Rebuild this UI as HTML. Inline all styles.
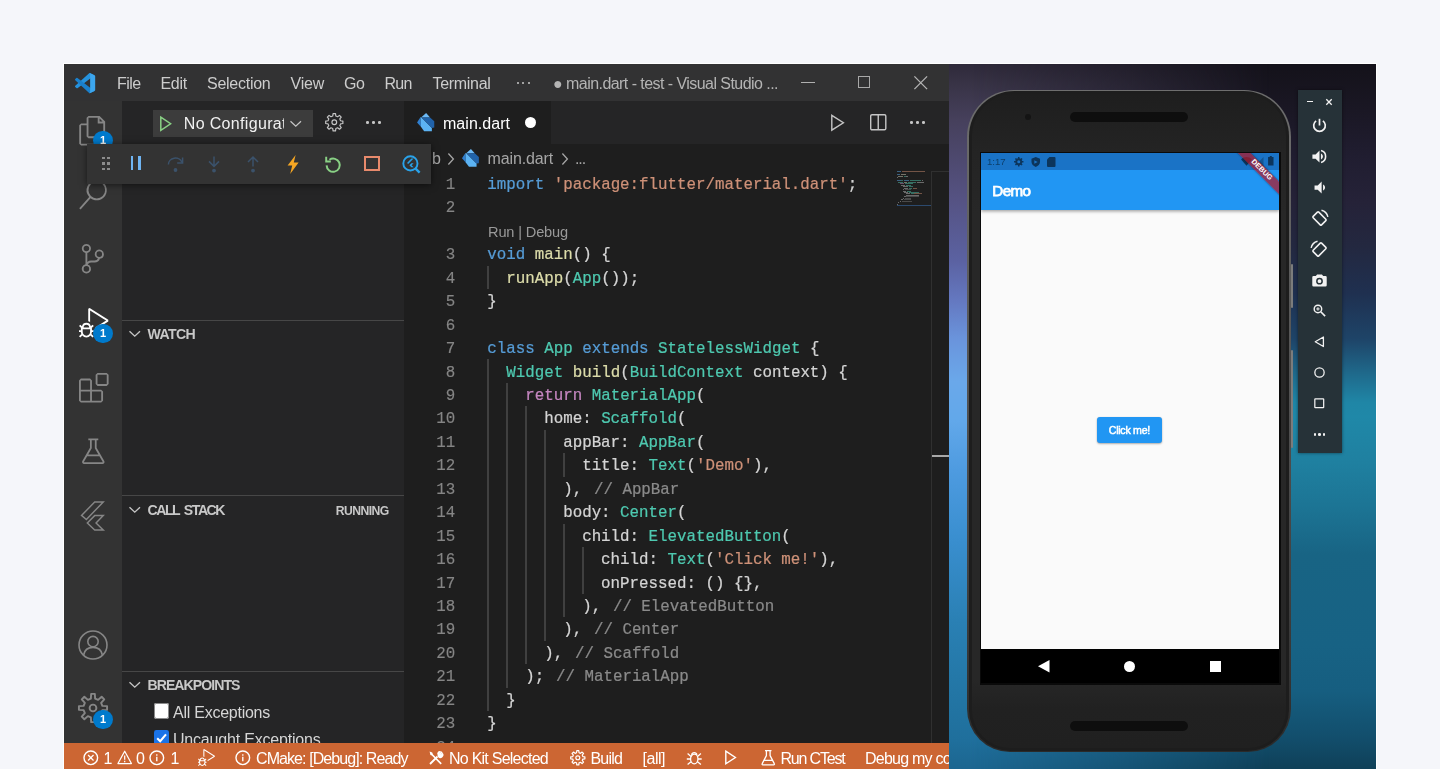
<!DOCTYPE html><html lang="en"><head><meta charset="utf-8"><title>Flutter debugging in VS Code</title>
<style>

html,body{margin:0;padding:0}
html{width:1440px;height:769px;overflow:hidden}
body{width:1440px;height:769px;overflow:hidden;background:#f5f6fa;position:relative;font-family:"Liberation Sans",sans-serif}
.a{position:absolute}
#vs,#code,.t{will-change:opacity}
.t{position:absolute;white-space:pre;line-height:1}
#shot{position:absolute;left:63px;top:63px;width:1314px;height:706px;background:#ffffff}
#vs{position:absolute;left:64px;top:64px;width:885px;height:705px;background:#1e1e1e;overflow:hidden}
#wall{position:absolute;left:949px;top:64px;width:427px;height:705px;overflow:hidden}
.ln{position:absolute;left:404px;width:51.3px;-webkit-text-stroke:0.15px currentColor;text-align:right;color:#858585;white-space:pre;line-height:1;font-family:"Liberation Mono",monospace;font-size:15.82px}
.cl{position:absolute;left:487.3px;-webkit-text-stroke:0.22px currentColor;white-space:pre;line-height:1;font-family:"Liberation Mono",monospace;font-size:15.82px;letter-spacing:-0.004px}
.g{position:absolute;width:1.2px;background:#404040}
svg{position:absolute;overflow:visible}

</style></head><body>
<div id="shot"></div>
<div id="wall" style="z-index:5"><div class="a" style="left:-949px;top:-64px;width:1440px;height:769px">
<div class="a" style="left:949px;top:64px;width:427px;height:705px;background:linear-gradient(to bottom,#14121a 0%,#1a1724 6.5%,#201d30 13%,#252238 19.5%,#232840 26%,#1f3050 32.5%,#1e4468 39%,#1f6a8c 44%,#1f86a6 48%,#1f88a8 50%,#1f80a0 56.6%,#1c7494 63%,#186484 69.6%,#176284 82.5%,#165e80 89%,#124e6c 95.6%,#0f4058 100%)"></div>
<div class="a" style="left:949px;top:64px;width:427px;height:705px;background:linear-gradient(to bottom,#2f2a3a 0%,#3a3549 3.5%,#46405c 8%,#555282 19%,#5b62a2 28%,#6478c0 33.5%,#6a94dc 39%,#6aa8ea 45%,#62a8ea 50.5%,#4e9be0 57.6%,#3a8fd0 67%,#2a80b4 79%,#2478a8 87%,#1f6f9c 96%,#1c6690 100%);-webkit-mask-image:linear-gradient(to right,#000 0%,#000 5%,rgba(0,0,0,.55) 40%,transparent 75%);mask-image:linear-gradient(to right,#000 0%,#000 5%,rgba(0,0,0,.55) 40%,transparent 75%)"></div>
<div class="a" style="left:1290.5px;top:264px;width:2.6px;height:44px;background:#7c7c7c;border-radius:1px"></div>
<div class="a" style="left:1290.5px;top:350px;width:2.6px;height:98px;background:#7c7c7c;border-radius:1px"></div>
<div class="a" style="left:967px;top:89.5px;width:324px;height:662.5px;border-radius:47px 47px 43px 43px;background:linear-gradient(to bottom,#6e6e6e 0%,#5a5a5a 30%,#444 70%,#2a2a2a 100%)"></div>
<div class="a" style="left:968.6px;top:91.3px;width:320.8px;height:659.6px;border-radius:45.5px 45.5px 41.5px 41.5px;background:#1d1d1d"></div>
<div class="a" style="left:972px;top:94px;width:314px;height:654px;border-radius:42px 42px 38px 38px;background:linear-gradient(to bottom,#1e1e1e 0,#242424 60px,#272727 120px,#272727 585px,#212121 615px,#202020 100%)"></div>
<div class="a" style="left:1070px;top:112px;width:118px;height:10px;border-radius:5px;background:#0e0e0e"></div>
<div class="a" style="left:1070px;top:720.5px;width:118px;height:10px;border-radius:5px;background:#0e0e0e"></div>
<div class="a" style="left:1025px;top:114px;width:6px;height:6px;border-radius:50%;background:#141414"></div>
<div class="a" style="left:979.5px;top:151.5px;width:301px;height:533px;background:#0a0a0a"></div>
<div class="a" id="screen" style="left:981px;top:153px;width:298px;height:530px;background:#fafafa;overflow:hidden"><div class="a" style="left:-981px;top:-153px;width:1440px;height:769px">
<div class="a" style="left:981px;top:170px;width:298px;height:40px;background:#2196f3;box-shadow:0 1.5px 3px rgba(0,0,0,.35)"></div>
<div class="a" style="left:981px;top:153px;width:298px;height:17px;background:#1a73c6"></div>
<svg class="a" style="left:1014px;top:157px" width="9.5" height="9.5" viewBox="0 0 20 20" ><path fill="#0c355c" fill-rule="evenodd" d="M8.22 2.82 L8.59 0.10 L11.41 0.10 L11.78 2.82 L13.82 3.66 L16.00 2.00 L18.00 4.00 L16.34 6.18 L17.18 8.22 L19.90 8.59 L19.90 11.41 L17.18 11.78 L16.34 13.82 L18.00 16.00 L16.00 18.00 L13.82 16.34 L11.78 17.18 L11.41 19.90 L8.59 19.90 L8.22 17.18 L6.18 16.34 L4.00 18.00 L2.00 16.00 L3.66 13.82 L2.82 11.78 L0.10 11.41 L0.10 8.59 L2.82 8.22 L3.66 6.18 L2.00 4.00 L4.00 2.00 L6.18 3.66 Z M13.2 10 A3.2 3.2 0 1 0 6.8 10 A3.2 3.2 0 1 0 13.2 10 Z"/></svg>
<svg class="a" style="left:1030.5px;top:156.8px" width="9.5" height="10" viewBox="0 0 20 21" ><path fill="#0c355c" fill-rule="evenodd" d="M10 0 L19 3.5 V10 C19 15 15 19 10 21 C5 19 1 15 1 10 V3.5 Z M7 7 V14 L14 10.5 Z"/></svg>
<svg class="a" style="left:1047px;top:156.8px" width="8.5" height="10" viewBox="0 0 17 20" ><path fill="#0c355c" d="M5 0 H15 A2 2 0 0 1 17 2 V18 A2 2 0 0 1 15 20 H2 A2 2 0 0 1 0 18 V5 Z"/></svg>
<svg class="a" style="left:1241px;top:157px" width="11" height="8.8" viewBox="0 0 22 18" ><path fill="#0c355c" d="M11 18 L0 5 C6 -1.6 16 -1.6 22 5 Z"/></svg>
<svg class="a" style="left:1254.5px;top:156.6px" width="8.5" height="9" viewBox="0 0 17 18" ><path fill="#0c355c" opacity=".45" d="M17 0 V18 H0 Z"/></svg>
<svg class="a" style="left:1267.5px;top:156.4px" width="5.6" height="9.4" viewBox="0 0 11 19" ><path fill="#0c355c" d="M3.5 0 H7.5 V2 H11 V19 H0 V2 H3.5 Z"/></svg>
<div class="a" style="left:1279px;top:153px;width:0;height:0"><div class="a" style="left:-60px;top:20.3px;width:120px;height:8.7px;background:rgba(176,24,40,.72);transform-origin:60px -20.3px;transform:rotate(45deg);text-align:center;line-height:8.7px;font-size:7.2px;font-weight:700;color:#fff;letter-spacing:.1px;box-shadow:0 0 2px rgba(0,0,0,.5)">DEBUG</div></div>
<div class="a" style="left:1097px;top:416.6px;width:65px;height:26px;border-radius:3px;background:#2196f3;box-shadow:0 1px 2px rgba(0,0,0,.3),0 0 1px rgba(0,0,0,.15)"></div>
<div class="a" style="left:981px;top:649px;width:298px;height:34px;background:#000"></div>
<svg class="a" style="left:1037.5px;top:660px" width="11.5" height="12.4" viewBox="0 0 11.5 12.4" ><path fill="#fff" d="M11.5 0 V12.4 L0 6.2 Z"/></svg>
<div class="a" style="left:1124px;top:660.7px;width:11px;height:11px;border-radius:50%;background:#fff"></div>
<div class="a" style="left:1209.5px;top:660.8px;width:11px;height:11px;background:#fff"></div>
</div></div>
<div class="a" style="left:1298px;top:90px;width:44px;height:362.5px;background:#263238;box-shadow:0 0 3px rgba(0,0,0,.5)"></div>
<div class="a" style="left:1307px;top:101.2px;width:6px;height:1.3px;background:#f2f2f2"></div>
<svg class="a" style="left:1326px;top:98.5px" width="6" height="6" viewBox="0 0 6 6" ><path d="M0.3 0.3 L5.7 5.7 M5.7 0.3 L0.3 5.7" stroke="#f2f2f2" stroke-width="1.3" fill="none"/></svg>
<svg class="a" style="left:1311.0px;top:117.0px" width="17" height="17" viewBox="0 0 24 24" ><path d="M12 2.5 V12" stroke="#f2f2f2" stroke-width="2.4" fill="none"/><path d="M7.2 5.4 A8.2 8.2 0 1 0 16.8 5.4" stroke="#f2f2f2" stroke-width="2.4" fill="none"/></svg>
<svg class="a" style="left:1311.0px;top:147.5px" width="17" height="17" viewBox="0 0 24 24" ><path fill="#f2f2f2" d="M2 9 V15 H6.5 L12 20.5 V3.5 L6.5 9 Z"/><path fill="#f2f2f2" d="M14 7.8 V16.2 C15.7 15.4 16.8 13.8 16.8 12 C16.8 10.2 15.7 8.6 14 7.8 Z"/><path d="M14.2 3.6 A8.7 8.7 0 0 1 14.2 20.4" stroke="#f2f2f2" stroke-width="2.2" fill="none"/></svg>
<svg class="a" style="left:1311.0px;top:179.0px" width="17" height="17" viewBox="0 0 24 24" ><path fill="#f2f2f2" d="M5 9 V15 H9.5 L15 20.5 V3.5 L9.5 9 Z"/><path fill="#f2f2f2" d="M17 7.8 V16.2 C18.7 15.4 19.8 13.8 19.8 12 C19.8 10.2 18.7 8.6 17 7.8 Z"/></svg>
<svg class="a" style="left:1310.0px;top:209.0px" width="19" height="19" viewBox="0 0 24 24" ><rect x="7" y="4.5" width="10" height="15" rx="1.2" transform="rotate(-45 12 12)" fill="none" stroke="#f2f2f2" stroke-width="2"/><path d="M14.5 1.6 A11 11 0 0 1 22.6 10" stroke="#f2f2f2" stroke-width="1.8" fill="none"/></svg>
<svg class="a" style="left:1310.0px;top:240.0px" width="19" height="19" viewBox="0 0 24 24" ><rect x="7" y="4.5" width="10" height="15" rx="1.2" transform="rotate(45 12 12)" fill="none" stroke="#f2f2f2" stroke-width="2"/><path d="M9.5 1.6 A11 11 0 0 0 1.4 10" stroke="#f2f2f2" stroke-width="1.8" fill="none"/></svg>
<svg class="a" style="left:1311.0px;top:271.5px" width="17" height="17" viewBox="0 0 24 24" ><path fill="#f2f2f2" fill-rule="evenodd" d="M8.6 3.5 H15.4 L17.2 5.6 H20.4 A1.8 1.8 0 0 1 22.2 7.4 V18.8 A1.8 1.8 0 0 1 20.4 20.6 H3.6 A1.8 1.8 0 0 1 1.8 18.8 V7.4 A1.8 1.8 0 0 1 3.6 5.6 H6.8 Z M12 8.2 A4.8 4.8 0 1 0 12 17.8 A4.8 4.8 0 1 0 12 8.2 Z M12 10.3 A2.7 2.7 0 1 1 12 15.7 A2.7 2.7 0 1 1 12 10.3 Z"/></svg>
<svg class="a" style="left:1312.0px;top:303.0px" width="15" height="15" viewBox="0 0 24 24" ><circle cx="9.5" cy="9.5" r="6" fill="none" stroke="#f2f2f2" stroke-width="2.3"/><path d="M14 14 L21 21" stroke="#f2f2f2" stroke-width="2.6"/><path d="M6.8 9.5 H12.2 M9.5 6.8 V12.2" stroke="#f2f2f2" stroke-width="1.6"/></svg>
<svg class="a" style="left:1312.75px;top:335.25px" width="13.5" height="13.5" viewBox="0 0 24 24" ><path d="M18.5 3.5 V20.5 L4 12 Z" fill="none" stroke="#f2f2f2" stroke-width="2.3" stroke-linejoin="round"/></svg>
<svg class="a" style="left:1313.0px;top:366.1px" width="13" height="13" viewBox="0 0 24 24" ><circle cx="12" cy="12" r="8.6" fill="none" stroke="#f2f2f2" stroke-width="2.4"/></svg>
<svg class="a" style="left:1313.25px;top:397.25px" width="12.5" height="12.5" viewBox="0 0 24 24" ><rect x="3.5" y="3.5" width="17" height="17" rx="1" fill="none" stroke="#f2f2f2" stroke-width="2.4"/></svg>
<div class="a" style="left:1313.9px;top:433.0px;width:2.6px;height:2.6px;border-radius:50%;background:#f2f2f2"></div>
<div class="a" style="left:1318.2px;top:433.0px;width:2.6px;height:2.6px;border-radius:50%;background:#f2f2f2"></div>
<div class="a" style="left:1322.5px;top:433.0px;width:2.6px;height:2.6px;border-radius:50%;background:#f2f2f2"></div>
</div></div>
<div id="vs"><div class="a" style="left:-64px;top:-64px;width:1440px;height:769px">
<div class="a" style="left:64px;top:64px;width:885px;height:37px;background:#323233"></div>
<svg class="a" style="left:75px;top:72.8px" width="20.2" height="20.2" viewBox="0 0 100 100" ><path fill="#2592dd" d="M96.5 10.8 75.9 0.9a6.2 6.2 0 0 0-7.1 1.2L1.3 63.6a4.2 4.2 0 0 0 0 6.2l5.5 5a4.2 4.2 0 0 0 5.3.2L93.3 13.4c2.7-2.1 6.7-.1 6.7 3.3v-.2a6.300 6.300 0 0 0-3.500-5.700z"/><path fill="#1a80cc" d="M96.5 89.200 75.900 99.100a6.200 6.200 0 0 1-7.100-1.200L1.300 36.400a4.200 4.200 0 0 1 0-6.200l5.500-5a4.200 4.200 0 0 1 5.300-.2L93.300 86.600c2.700 2.100 6.700.1 6.700-3.300v.2a6.300 6.300 0 0 1-3.500 5.700z"/><path fill="#3ca6ee" d="M75.900 99.100a6.200 6.200 0 0 1-7.100-1.200c2.300 2.300 6.200.7 6.200-2.600V4.700c0-3.300-3.900-4.900-6.200-2.600a6.200 6.200 0 0 1 7.100-1.200l20.600 9.900A6.300 6.300 0 0 1 100 16.500v67a6.300 6.300 0 0 1-3.500 5.700z"/></svg>
<div class="a" style="left:516.5px;top:82px;width:2px;height:2px;border-radius:50%;background:#c8c8c8"></div>
<div class="a" style="left:522px;top:82px;width:2px;height:2px;border-radius:50%;background:#c8c8c8"></div>
<div class="a" style="left:527.5px;top:82px;width:2px;height:2px;border-radius:50%;background:#c8c8c8"></div>
<div class="a" style="left:801px;top:82px;width:14px;height:1.3px;background:#b0b0b0"></div>
<div class="a" style="left:858px;top:76px;width:12px;height:12px;box-sizing:border-box;border:1.3px solid #a8a8a8"></div>
<svg class="a" style="left:914px;top:75.5px" width="13.5" height="13.5" viewBox="0 0 13.5 13.5" ><path d="M0.4 0.4 L13.1 13.1 M13.1 0.4 L0.4 13.1" stroke="#b4b4b4" stroke-width="1.3" fill="none"/></svg>
<div class="a" style="left:64px;top:101px;width:58px;height:642px;background:#333333"></div>
<svg class="a" style="left:78.2px;top:115.7px" width="29.6" height="29.6" viewBox="0 0 24 24" ><path fill="#868686" d="M17.5 0h-9L7 1.5V6H2.5L1 7.5v15.07L2.5 24h12.07L16 22.57V18h4.7l1.3-1.43V4.5L17.5 0zm0 2.12l2.38 2.38H17.5V2.12zm-3 20.38h-12v-15H7v9.07L8.5 18h6v4.5zm6-6h-12v-15H16V6h4.5v10.5z"/></svg>
<div class="a" style="left:93.4px;top:130.70000000000002px;width:19.2px;height:19.2px;border-radius:50%;background:#007acc"></div><span class="t" style="left:93.4px;width:19.2px;text-align:center;top:134.70000000000002px;font-size:11px;font-weight:700;color:#fff">1</span>
<svg class="a" style="left:78.2px;top:179.7px" width="29.6" height="29.6" viewBox="0 0 24 24" ><path fill="#868686" d="M15.25 0a8.25 8.25 0 0 0-6.18 13.72L1 22.88l1.12 1.12 8.05-9.12A8.251 8.251 0 1 0 15.25.01V0zm0 15a6.75 6.75 0 1 1 0-13.5 6.75 6.75 0 0 1 0 13.5z"/></svg>
<svg class="a" style="left:78.2px;top:243.7px" width="29.6" height="29.6" viewBox="0 0 24 24" ><path fill="#868686" d="M21.007 8.222A3.738 3.738 0 0 0 15.045 5.2a3.737 3.737 0 0 0 1.156 6.583 2.988 2.988 0 0 1-2.668 1.67h-2.99a4.456 4.456 0 0 0-2.989 1.165V7.4a3.737 3.737 0 1 0-1.494 0v9.117a3.776 3.776 0 1 0 1.816.099 2.99 2.99 0 0 1 2.668-1.667h2.99a4.484 4.484 0 0 0 4.223-3.039 3.736 3.736 0 0 0 3.25-3.687zM4.565 3.738a2.242 2.242 0 1 1 4.484 0 2.242 2.242 0 0 1-4.484 0zm4.484 16.441a2.242 2.242 0 1 1-4.484 0 2.242 2.242 0 0 1 4.484 0zm8.221-9.715a2.242 2.242 0 1 1 0-4.485 2.242 2.242 0 0 1 0 4.485z"/></svg>
<svg class="a" style="left:78.7px;top:308.2px" width="29.6" height="29.6" viewBox="0 0 24 24" ><path fill="#ffffff" d="M10.94 13.5l-1.32 1.32a3.73 3.73 0 0 0-7.24 0L1.06 13.5 0 14.56l1.72 1.72-.22.22V18H0v1.5h1.5v.08c.077.489.214.966.41 1.42L0 22.94 1.06 24l1.65-1.65A4.308 4.308 0 0 0 6 24a4.31 4.31 0 0 0 3.29-1.65L10.94 24 12 22.94 10.09 21c.198-.464.336-.951.41-1.45v-.1H12V18h-1.5v-1.5l-.22-.22L12 14.56l-1.06-1.06zM6 13.5a2.25 2.25 0 0 1 2.25 2.25h-4.5A2.25 2.25 0 0 1 6 13.5zm3 6a3.33 3.33 0 0 1-3 3 3.33 3.33 0 0 1-3-3v-2.25h6v2.25zm14.76-9.9v1.26L13.5 17.37V15.6l8.5-5.37L9 2v9.46a5.07 5.07 0 0 0-1.5-.72V.63L8.64 0l15.12 9.6z"/></svg>
<div class="a" style="left:93.4px;top:323.9px;width:19.2px;height:19.2px;border-radius:50%;background:#007acc"></div><span class="t" style="left:93.4px;width:19.2px;text-align:center;top:327.9px;font-size:11px;font-weight:700;color:#fff">1</span>
<svg class="a" style="left:78.7px;top:372.7px" width="29.6" height="29.6" viewBox="0 0 24 24" ><path fill="#868686" d="M13.5 1.5L15 0h7.5L24 1.5V9l-1.5 1.5H15L13.5 9V1.5zm1.5 0V9h7.5V1.5H15zM0 15V6l1.5-1.5H9L10.5 6v7.5H18l1.5 1.5v7.5L18 24H1.5L0 22.5V15zm9-1.5V6H1.5v7.5H9zM9 15H1.5v7.5H9V15zm1.5 7.5H18V15h-7.5v7.5z"/></svg>
<svg class="a" style="left:79.9px;top:438.2px" width="26.6" height="26.6" viewBox="0 0 24 24" ><path fill="none" stroke="#868686" stroke-width="1.6" stroke-linejoin="round" d="M7.5 1.2 H16.5 M9.8 1.2 V9 L2.8 21.2 A1 1 0 0 0 3.7 22.7 H20.3 A1 1 0 0 0 21.2 21.2 L14.2 9 V1.2 M6.2 15.6 H17.8"/></svg>
<svg class="a" style="left:79.6px;top:501.2px" width="24.2" height="30" viewBox="0 0 25 30" preserveAspectRatio="none"><path fill="none" stroke="#868686" stroke-width="1.5" stroke-linejoin="miter" d="M15.2 1 H24 L6.6 18.6 L1.6 14.4 Z M15.2 14.6 H24 L16.6 22 L24 29 H15.2 L7.6 22 Z"/></svg>
<svg class="a" style="left:78px;top:630px" width="30" height="30" viewBox="0 0 30 30" ><circle cx="15" cy="15" r="14" fill="none" stroke="#868686" stroke-width="1.6"/><circle cx="15" cy="11.6" r="5.2" fill="none" stroke="#868686" stroke-width="1.6"/><path d="M5.6 25 C6.6 20 10.4 17.4 15 17.4 C19.6 17.4 23.4 20 24.4 25" fill="none" stroke="#868686" stroke-width="1.6"/></svg>
<svg class="a" style="left:77.5px;top:693px" width="30" height="30" viewBox="0 0 30 30" ><path fill="none" stroke="#868686" stroke-width="1.9" stroke-linejoin="round" d="M12.87 5.64 L13.16 0.92 L16.84 0.92 L17.13 5.64 L20.11 6.87 L23.65 3.74 L26.26 6.35 L23.13 9.89 L24.36 12.87 L29.08 13.16 L29.08 16.84 L24.36 17.13 L23.13 20.11 L26.26 23.65 L23.65 26.26 L20.11 23.13 L17.13 24.36 L16.84 29.08 L13.16 29.08 L12.87 24.36 L9.89 23.13 L6.35 26.26 L3.74 23.65 L6.87 20.11 L5.64 17.13 L0.92 16.84 L0.92 13.16 L5.64 12.87 L6.87 9.89 L3.74 6.35 L6.35 3.74 L9.89 6.87 Z"/><circle cx="15" cy="15" r="3.4" fill="none" stroke="#868686" stroke-width="1.9"/></svg>
<div class="a" style="left:93.4px;top:709.9px;width:19.2px;height:19.2px;border-radius:50%;background:#007acc"></div><span class="t" style="left:93.4px;width:19.2px;text-align:center;top:713.9px;font-size:11px;font-weight:700;color:#fff">1</span>
<div class="a" style="left:122px;top:101px;width:282px;height:642px;background:#252526"></div>
<div class="a" style="left:153px;top:109.5px;width:159.5px;height:27px;background:#3c3c3c"></div>
<svg class="a" style="left:160px;top:115.5px" width="11.5" height="15.5" viewBox="0 0 11.5 15.5" ><path d="M0.8 1.2 L10.6 7.75 L0.8 14.3 Z" fill="none" stroke="#89d185" stroke-width="1.5" stroke-linejoin="miter"/></svg>
<svg class="a" style="left:324.6px;top:113.2px" width="18.6" height="18.6" viewBox="0 0 30 30" ><path fill="none" stroke="#c5c5c5" stroke-width="1.9" stroke-linejoin="round" d="M12.49 4.91 L13.03 1.14 L16.97 1.14 L17.51 4.91 L20.36 6.09 L23.41 3.80 L26.20 6.59 L23.91 9.64 L25.09 12.49 L28.86 13.03 L28.86 16.97 L25.09 17.51 L23.91 20.36 L26.20 23.41 L23.41 26.20 L20.36 23.91 L17.51 25.09 L16.97 28.86 L13.03 28.86 L12.49 25.09 L9.64 23.91 L6.59 26.20 L3.80 23.41 L6.09 20.36 L4.91 17.51 L1.14 16.97 L1.14 13.03 L4.91 12.49 L6.09 9.64 L3.80 6.59 L6.59 3.80 L9.64 6.09 Z"/><circle cx="15" cy="15" r="3.8" fill="none" stroke="#c5c5c5" stroke-width="1.9"/></svg>
<div class="a" style="left:366.4px;top:121.3px;width:2.7px;height:2.7px;border-radius:50%;background:#c5c5c5"></div>
<div class="a" style="left:372.2px;top:121.3px;width:2.7px;height:2.7px;border-radius:50%;background:#c5c5c5"></div>
<div class="a" style="left:377.9px;top:121.3px;width:2.7px;height:2.7px;border-radius:50%;background:#c5c5c5"></div>
<div class="a" style="left:122px;top:319.5px;width:282px;height:1px;background:#474747"></div>
<div class="a" style="left:122px;top:495.0px;width:282px;height:1px;background:#474747"></div>
<div class="a" style="left:122px;top:671.0px;width:282px;height:1px;background:#474747"></div>
<svg class="a" style="left:129.15px;top:331.425px" width="11.5" height="5.75" viewBox="0 0 11.5 5.75" ><path d="M0.5 0.3 L5.75 5.15 L11.0 0.3" fill="none" stroke="#c5c5c5" stroke-width="1.4"/></svg>
<svg class="a" style="left:129.15px;top:506.925px" width="11.5" height="5.75" viewBox="0 0 11.5 5.75" ><path d="M0.5 0.3 L5.75 5.15 L11.0 0.3" fill="none" stroke="#c5c5c5" stroke-width="1.4"/></svg>
<svg class="a" style="left:129.15px;top:682.325px" width="11.5" height="5.75" viewBox="0 0 11.5 5.75" ><path d="M0.5 0.3 L5.75 5.15 L11.0 0.3" fill="none" stroke="#c5c5c5" stroke-width="1.4"/></svg>
<div class="a" style="left:153.8px;top:703.3px;width:15px;height:15.4px;border-radius:2.4px;background:#ffffff;box-shadow:inset 0 0 0 1px #8a8a8a"></div>
<div class="a" style="left:153.8px;top:730px;width:15px;height:15.4px;border-radius:2.4px;background:#1a73e8"></div>
<svg class="a" style="left:153.8px;top:730px" width="15" height="15.4" viewBox="0 0 15 15.4" ><path d="M3.2 8.2 L6.2 11.2 L12 4.4" fill="none" stroke="#fff" stroke-width="2.1"/></svg>
<div class="a" style="left:404px;top:101px;width:545px;height:43px;background:#252526"></div>
<div class="a" style="left:404px;top:101px;width:146.5px;height:43px;background:#1e1e1e"></div>
<svg class="a" style="left:414px;top:110px" width="26" height="26" viewBox="0 0 77 77" ><path d="M36 9 L47.5 22 L21 22.5 Z" fill="#6cbaf7"/><path d="M19.5 21 L9 37 L20.5 49.5 Z" fill="#2f7fd0"/><path d="M19.5 21 L23 23 L53 53 L53 63 L30 63 L20.5 49.5 Z" fill="#5cb3f3"/><path d="M23 23 L21 22.5 L47.5 22 L60 33.5 L60 52 L53 53 Z" fill="#2163aa"/></svg>
<div class="a" style="left:525px;top:117px;width:11px;height:11px;border-radius:50%;background:#ffffff"></div>
<svg class="a" style="left:831px;top:114px" width="13.5" height="17.5" viewBox="0 0 13.5 17.5" ><path d="M0.8 1.3 L12.4 8.75 L0.8 16.2 Z" fill="none" stroke="#c5c5c5" stroke-width="1.4"/></svg>
<svg class="a" style="left:870px;top:114.3px" width="16.5" height="16.5" viewBox="0 0 16.5 16.5" ><rect x="0.7" y="0.7" width="15.1" height="15.1" rx="1.3" fill="none" stroke="#c5c5c5" stroke-width="1.4"/><path d="M8.25 0.7 V15.8" stroke="#c5c5c5" stroke-width="1.4"/></svg>
<div class="a" style="left:909.9px;top:121.3px;width:2.7px;height:2.7px;border-radius:50%;background:#c5c5c5"></div>
<div class="a" style="left:915.9px;top:121.3px;width:2.7px;height:2.7px;border-radius:50%;background:#c5c5c5"></div>
<div class="a" style="left:921.9px;top:121.3px;width:2.7px;height:2.7px;border-radius:50%;background:#c5c5c5"></div>
<svg class="a" style="left:447.6px;top:152.5px" width="6.0" height="12" viewBox="0 0 6.0 12" ><path d="M0.4 0.5 L5.4 6.0 L0.4 11.5" fill="none" stroke="#a6a6a6" stroke-width="1.3"/></svg>
<svg class="a" style="left:458.6px;top:145.9px" width="25.5" height="25.5" viewBox="0 0 77 77" ><path d="M36 9 L47.5 22 L21 22.5 Z" fill="#6cbaf7"/><path d="M19.5 21 L9 37 L20.5 49.5 Z" fill="#2f7fd0"/><path d="M19.5 21 L23 23 L53 53 L53 63 L30 63 L20.5 49.5 Z" fill="#5cb3f3"/><path d="M23 23 L21 22.5 L47.5 22 L60 33.5 L60 52 L53 53 Z" fill="#2163aa"/></svg>
<svg class="a" style="left:561.5px;top:152.5px" width="6.0" height="12" viewBox="0 0 6.0 12" ><path d="M0.4 0.5 L5.4 6.0 L0.4 11.5" fill="none" stroke="#a6a6a6" stroke-width="1.3"/></svg>
<div class="a" style="left:897px;top:171px;width:34px;height:34px;overflow:hidden;opacity:.62"><div class="a" style="left:0.0px;top:0.4px;width:4.3px;height:1.1px;background:#4f8cc0"></div><div class="a" style="left:5.0px;top:0.4px;width:23.0px;height:1.1px;background:#a8765f"></div><div class="a" style="left:0.0px;top:3.3px;width:2.9px;height:1.1px;background:#4f8cc0"></div><div class="a" style="left:3.6px;top:3.3px;width:5.8px;height:1.1px;background:#a9a996"></div><div class="a" style="left:1.4px;top:4.8px;width:4.3px;height:1.1px;background:#a9a996"></div><div class="a" style="left:6.5px;top:4.8px;width:2.2px;height:1.1px;background:#45a08c"></div><div class="a" style="left:8.6px;top:4.8px;width:2.9px;height:1.1px;background:#999"></div><div class="a" style="left:0.0px;top:6.3px;width:0.7px;height:1.1px;background:#999"></div><div class="a" style="left:0.0px;top:9.2px;width:3.6px;height:1.1px;background:#4f8cc0"></div><div class="a" style="left:4.3px;top:9.2px;width:2.2px;height:1.1px;background:#45a08c"></div><div class="a" style="left:7.2px;top:9.2px;width:5.0px;height:1.1px;background:#4f8cc0"></div><div class="a" style="left:13.0px;top:9.2px;width:10.8px;height:1.1px;background:#45a08c"></div><div class="a" style="left:24.5px;top:9.2px;width:0.7px;height:1.1px;background:#999"></div><div class="a" style="left:1.4px;top:10.7px;width:4.3px;height:1.1px;background:#45a08c"></div><div class="a" style="left:6.5px;top:10.7px;width:3.6px;height:1.1px;background:#a9a996"></div><div class="a" style="left:10.8px;top:10.7px;width:8.6px;height:1.1px;background:#45a08c"></div><div class="a" style="left:20.2px;top:10.7px;width:7.2px;height:1.1px;background:#999"></div><div class="a" style="left:2.9px;top:12.2px;width:4.3px;height:1.1px;background:#9a6f9a"></div><div class="a" style="left:7.9px;top:12.2px;width:7.9px;height:1.1px;background:#45a08c"></div><div class="a" style="left:4.3px;top:13.6px;width:3.6px;height:1.1px;background:#999"></div><div class="a" style="left:8.6px;top:13.6px;width:5.8px;height:1.1px;background:#45a08c"></div><div class="a" style="left:5.8px;top:15.1px;width:5.0px;height:1.1px;background:#999"></div><div class="a" style="left:11.5px;top:15.1px;width:4.3px;height:1.1px;background:#45a08c"></div><div class="a" style="left:7.2px;top:16.6px;width:4.3px;height:1.1px;background:#999"></div><div class="a" style="left:12.2px;top:16.6px;width:2.9px;height:1.1px;background:#45a08c"></div><div class="a" style="left:15.8px;top:16.6px;width:4.3px;height:1.1px;background:#a8765f"></div><div class="a" style="left:5.8px;top:18.0px;width:1.4px;height:1.1px;background:#999"></div><div class="a" style="left:7.9px;top:18.0px;width:6.5px;height:1.1px;background:#666"></div><div class="a" style="left:5.8px;top:19.5px;width:3.6px;height:1.1px;background:#999"></div><div class="a" style="left:10.1px;top:19.5px;width:4.3px;height:1.1px;background:#45a08c"></div><div class="a" style="left:7.2px;top:21.0px;width:4.3px;height:1.1px;background:#999"></div><div class="a" style="left:12.2px;top:21.0px;width:10.1px;height:1.1px;background:#45a08c"></div><div class="a" style="left:8.6px;top:22.4px;width:4.3px;height:1.1px;background:#999"></div><div class="a" style="left:13.7px;top:22.4px;width:2.9px;height:1.1px;background:#45a08c"></div><div class="a" style="left:17.3px;top:22.4px;width:7.9px;height:1.1px;background:#a8765f"></div><div class="a" style="left:8.6px;top:23.9px;width:13.0px;height:1.1px;background:#999"></div><div class="a" style="left:7.2px;top:25.4px;width:1.4px;height:1.1px;background:#999"></div><div class="a" style="left:9.4px;top:25.4px;width:12.2px;height:1.1px;background:#666"></div><div class="a" style="left:5.8px;top:26.9px;width:1.4px;height:1.1px;background:#999"></div><div class="a" style="left:7.9px;top:26.9px;width:6.5px;height:1.1px;background:#666"></div><div class="a" style="left:4.3px;top:28.3px;width:1.4px;height:1.1px;background:#999"></div><div class="a" style="left:6.5px;top:28.3px;width:7.9px;height:1.1px;background:#666"></div><div class="a" style="left:2.9px;top:29.8px;width:1.4px;height:1.1px;background:#999"></div><div class="a" style="left:5.0px;top:29.8px;width:10.1px;height:1.1px;background:#666"></div><div class="a" style="left:1.4px;top:31.3px;width:0.7px;height:1.1px;background:#999"></div><div class="a" style="left:0.0px;top:32.7px;width:0.7px;height:1.1px;background:#999"></div></div><div class="a" style="left:897px;top:204.5px;width:34px;height:1px;background:#2c4a6e"></div>
<div class="a" style="left:931px;top:171px;width:1px;height:572px;background:#303030"></div>
<div class="a" style="left:931px;top:171px;width:18px;height:1px;background:#303030"></div>
<div class="a" style="left:932px;top:454.5px;width:17px;height:2px;background:#a8a8a8"></div>
</div></div>
<div id="code">
<div class="g" style="left:487.4px;top:265.55px;height:23.45px"></div>
<div class="g" style="left:487.4px;top:359.35px;height:351.75px"></div>
<div class="g" style="left:506.4px;top:382.80px;height:304.85px"></div>
<div class="g" style="left:525.4px;top:406.25px;height:257.95px"></div>
<div class="g" style="left:544.4px;top:429.70px;height:211.05px"></div>
<div class="g" style="left:563.4px;top:453.15px;height:23.45px"></div>
<div class="g" style="left:563.4px;top:523.50px;height:93.80px"></div>
<div class="g" style="left:582.4px;top:546.95px;height:46.90px"></div>
<div class="ln" style="top:177.92px">1</div>
<div class="cl" style="top:177.92px"><span style="color:#569cd6">import</span><span style="color:#d4d4d4"> </span><span style="color:#ce9178">'package:flutter/material.dart'</span><span style="color:#d4d4d4">;</span></div>
<div class="ln" style="top:201.37px">2</div>
<div class="ln" style="top:248.27px">3</div>
<div class="cl" style="top:248.27px"><span style="color:#569cd6">void</span><span style="color:#d4d4d4"> </span><span style="color:#dcdcaa">main</span><span style="color:#d4d4d4">() {</span></div>
<div class="ln" style="top:271.72px">4</div>
<div class="cl" style="top:271.72px"><span style="color:#d4d4d4">  </span><span style="color:#dcdcaa">runApp</span><span style="color:#d4d4d4">(</span><span style="color:#4ec9b0">App</span><span style="color:#d4d4d4">());</span></div>
<div class="ln" style="top:295.17px">5</div>
<div class="cl" style="top:295.17px"><span style="color:#d4d4d4">}</span></div>
<div class="ln" style="top:318.62px">6</div>
<div class="ln" style="top:342.07px">7</div>
<div class="cl" style="top:342.07px"><span style="color:#569cd6">class</span><span style="color:#d4d4d4"> </span><span style="color:#4ec9b0">App</span><span style="color:#d4d4d4"> </span><span style="color:#569cd6">extends</span><span style="color:#d4d4d4"> </span><span style="color:#4ec9b0">StatelessWidget</span><span style="color:#d4d4d4"> {</span></div>
<div class="ln" style="top:365.52px">8</div>
<div class="cl" style="top:365.52px"><span style="color:#d4d4d4">  </span><span style="color:#4ec9b0">Widget</span><span style="color:#d4d4d4"> </span><span style="color:#dcdcaa">build</span><span style="color:#d4d4d4">(</span><span style="color:#4ec9b0">BuildContext</span><span style="color:#d4d4d4"> context) {</span></div>
<div class="ln" style="top:388.97px">9</div>
<div class="cl" style="top:388.97px"><span style="color:#d4d4d4">    </span><span style="color:#c586c0">return</span><span style="color:#d4d4d4"> </span><span style="color:#4ec9b0">MaterialApp</span><span style="color:#d4d4d4">(</span></div>
<div class="ln" style="top:412.42px">10</div>
<div class="cl" style="top:412.42px"><span style="color:#d4d4d4">      home: </span><span style="color:#4ec9b0">Scaffold</span><span style="color:#d4d4d4">(</span></div>
<div class="ln" style="top:435.87px">11</div>
<div class="cl" style="top:435.87px"><span style="color:#d4d4d4">        appBar: </span><span style="color:#4ec9b0">AppBar</span><span style="color:#d4d4d4">(</span></div>
<div class="ln" style="top:459.32px">12</div>
<div class="cl" style="top:459.32px"><span style="color:#d4d4d4">          title: </span><span style="color:#4ec9b0">Text</span><span style="color:#d4d4d4">(</span><span style="color:#ce9178">'Demo'</span><span style="color:#d4d4d4">),</span></div>
<div class="ln" style="top:482.77px">13</div>
<div class="cl" style="top:482.77px"><span style="color:#d4d4d4">        ), </span><span style="color:#8a8a8a;margin-left:2.3px">// AppBar</span></div>
<div class="ln" style="top:506.22px">14</div>
<div class="cl" style="top:506.22px"><span style="color:#d4d4d4">        body: </span><span style="color:#4ec9b0">Center</span><span style="color:#d4d4d4">(</span></div>
<div class="ln" style="top:529.67px">15</div>
<div class="cl" style="top:529.67px"><span style="color:#d4d4d4">          child: </span><span style="color:#4ec9b0">ElevatedButton</span><span style="color:#d4d4d4">(</span></div>
<div class="ln" style="top:553.12px">16</div>
<div class="cl" style="top:553.12px"><span style="color:#d4d4d4">            child: </span><span style="color:#4ec9b0">Text</span><span style="color:#d4d4d4">(</span><span style="color:#ce9178">'Click me!'</span><span style="color:#d4d4d4">),</span></div>
<div class="ln" style="top:576.57px">17</div>
<div class="cl" style="top:576.57px"><span style="color:#d4d4d4">            onPressed: () {},</span></div>
<div class="ln" style="top:600.02px">18</div>
<div class="cl" style="top:600.02px"><span style="color:#d4d4d4">          ), </span><span style="color:#8a8a8a;margin-left:2.3px">// ElevatedButton</span></div>
<div class="ln" style="top:623.47px">19</div>
<div class="cl" style="top:623.47px"><span style="color:#d4d4d4">        ), </span><span style="color:#8a8a8a;margin-left:2.3px">// Center</span></div>
<div class="ln" style="top:646.92px">20</div>
<div class="cl" style="top:646.92px"><span style="color:#d4d4d4">      ), </span><span style="color:#8a8a8a;margin-left:2.3px">// Scaffold</span></div>
<div class="ln" style="top:670.37px">21</div>
<div class="cl" style="top:670.37px"><span style="color:#d4d4d4">    ); </span><span style="color:#8a8a8a;margin-left:2.3px">// MaterialApp</span></div>
<div class="ln" style="top:693.82px">22</div>
<div class="cl" style="top:693.82px"><span style="color:#d4d4d4">  }</span></div>
<div class="ln" style="top:717.27px">23</div>
<div class="cl" style="top:717.27px"><span style="color:#d4d4d4">}</span></div>
<div class="ln" style="top:740.72px">24</div>
</div>
<div class="a" style="left:64px;top:743.4px;width:885px;height:26px;background:#cc6633;z-index:3"></div>
<svg class="a" style="left:82.7px;top:750.0px;z-index:4" width="15.6" height="15.6" viewBox="0 0 16 16"><circle cx="8" cy="8" r="7" fill="none" stroke="#ffffff" stroke-width="1.45"/><path d="M5.2 5.2 L10.8 10.8 M10.8 5.2 L5.2 10.8" stroke="#ffffff" stroke-width="1.3"/></svg>
<svg class="a" style="left:116.8px;top:750.3px;z-index:4" width="15.4" height="14.6" viewBox="0 0 16 15"><path d="M8 1.2 L15 14 H1 Z" fill="none" stroke="#ffffff" stroke-width="1.3" stroke-linejoin="round"/><path d="M8 5.6 V10 M8 11.2 V12.6" stroke="#ffffff" stroke-width="1.3"/></svg>
<svg class="a" style="left:149.2px;top:750.0px;z-index:4" width="15.6" height="15.6" viewBox="0 0 16 16"><circle cx="8" cy="8" r="7" fill="none" stroke="#ffffff" stroke-width="1.45"/><path d="M8 7 V11.6 M8 4.4 V5.8" stroke="#ffffff" stroke-width="1.4"/></svg>
<svg class="a" style="left:234.7px;top:750.0px;z-index:4" width="15.6" height="15.6" viewBox="0 0 16 16"><circle cx="8" cy="8" r="7" fill="none" stroke="#ffffff" stroke-width="1.45"/><path d="M8 7 V11.6 M8 4.4 V5.8" stroke="#ffffff" stroke-width="1.4"/></svg>
<svg class="a" style="left:197.5px;top:749.3px;z-index:4" width="17" height="17" viewBox="0 0 24 24"><path fill="#ffffff" d="M10.94 13.5l-1.32 1.32a3.73 3.73 0 0 0-7.24 0L1.06 13.5 0 14.56l1.72 1.72-.22.22V18H0v1.5h1.5v.08c.077.489.214.966.41 1.42L0 22.94 1.06 24l1.65-1.65A4.308 4.308 0 0 0 6 24a4.31 4.31 0 0 0 3.29-1.65L10.94 24 12 22.94 10.09 21c.198-.464.336-.951.41-1.45v-.1H12V18h-1.5v-1.5l-.22-.22L12 14.56l-1.06-1.06zM6 13.5a2.25 2.25 0 0 1 2.25 2.25h-4.5A2.25 2.25 0 0 1 6 13.5zm3 6a3.33 3.33 0 0 1-3 3 3.33 3.33 0 0 1-3-3v-2.25h6v2.25zm14.76-9.9v1.26L13.5 17.37V15.6l8.5-5.37L9 2v9.46a5.07 5.07 0 0 0-1.5-.72V.63L8.64 0l15.12 9.6z"/></svg>
<svg class="a" style="left:428px;top:749.8px;z-index:4" width="16" height="16" viewBox="0 0 16 16"><path d="M2 14 L9.5 6.5 M14 2 L10.2 5.8" stroke="#ffffff" stroke-width="1.8" fill="none"/><path d="M9.2 3.2 A3 3 0 0 1 13.2 1.4 L11.4 3.2 L12.8 4.6 L14.6 2.8 A3 3 0 0 1 10 7 Z" fill="#ffffff"/><path d="M1.6 1.6 L4.2 2.6 L5 4.4 L13.8 13.2 L12.6 14.4 L3.8 5.6 L2.4 5 Z" fill="#ffffff"/></svg>
<svg class="a" style="left:569.5px;top:750.0px;z-index:4" width="15.6" height="15.6" viewBox="0 0 30 30"><path fill="none" stroke="#ffffff" stroke-width="2.3" stroke-linejoin="round" d="M12.59 5.29 L13.06 1.34 L16.94 1.34 L17.41 5.29 L20.16 6.43 L23.29 3.96 L26.04 6.71 L23.57 9.84 L24.71 12.59 L28.66 13.06 L28.66 16.94 L24.71 17.41 L23.57 20.16 L26.04 23.29 L23.29 26.04 L20.16 23.57 L17.41 24.71 L16.94 28.66 L13.06 28.66 L12.59 24.71 L9.84 23.57 L6.71 26.04 L3.96 23.29 L6.43 20.16 L5.29 17.41 L1.34 16.94 L1.34 13.06 L5.29 12.59 L6.43 9.84 L3.96 6.71 L6.71 3.96 L9.84 6.43 Z"/><circle cx="15" cy="15" r="3.8" fill="none" stroke="#ffffff" stroke-width="2.3"/></svg>
<svg class="a" style="left:685.5px;top:749.8px;z-index:4" width="16.5" height="16" viewBox="0 0 16.5 16"><ellipse cx="8.25" cy="9" rx="3.7" ry="4.8" fill="none" stroke="#ffffff" stroke-width="1.3"/><path d="M5.6 4.8 A2.7 2.7 0 0 1 10.9 4.8 M0.8 9 H4.5 M12 9 H15.7 M1.6 3.6 L5 6.4 M14.9 3.6 L11.5 6.4 M1.6 14.6 L5 11.8 M14.9 14.6 L11.5 11.8" fill="none" stroke="#ffffff" stroke-width="1.3"/></svg>
<svg class="a" style="left:724.5px;top:750.3px;z-index:4" width="11.5" height="15" viewBox="0 0 11.5 15"><path d="M0.8 1.2 L10.4 7.5 L0.8 13.8 Z" fill="none" stroke="#ffffff" stroke-width="1.4"/></svg>
<svg class="a" style="left:760.5px;top:750.0px;z-index:4" width="14.5" height="15.6" viewBox="0 0 14.5 15.6"><path d="M4 0.7 H10.5 M5.4 0.7 V5.6 L1.2 13.6 A0.8 0.8 0 0 0 1.9 14.9 H12.6 A0.8 0.8 0 0 0 13.3 13.6 L9.1 5.6 V0.7 M3.3 10.4 H11.2" fill="none" stroke="#ffffff" stroke-width="1.3" stroke-linejoin="round"/></svg>
<div class="a" style="left:87px;top:144px;width:344px;height:39.6px;background:#333333;box-shadow:0 1px 7px rgba(0,0,0,.55);z-index:3"></div>
<div class="a" style="left:102.39999999999999px;top:157.20000000000002px;width:2.3px;height:2.3px;background:#8c8c8c;z-index:4"></div>
<div class="a" style="left:102.39999999999999px;top:162.4px;width:2.3px;height:2.3px;background:#8c8c8c;z-index:4"></div>
<div class="a" style="left:102.39999999999999px;top:167.60000000000002px;width:2.3px;height:2.3px;background:#8c8c8c;z-index:4"></div>
<div class="a" style="left:107.39999999999999px;top:157.20000000000002px;width:2.3px;height:2.3px;background:#8c8c8c;z-index:4"></div>
<div class="a" style="left:107.39999999999999px;top:162.4px;width:2.3px;height:2.3px;background:#8c8c8c;z-index:4"></div>
<div class="a" style="left:107.39999999999999px;top:167.60000000000002px;width:2.3px;height:2.3px;background:#8c8c8c;z-index:4"></div>
<div class="a" style="left:130.6px;top:156.2px;width:2.9px;height:14px;background:#6fb4f2;z-index:4"></div>
<div class="a" style="left:138px;top:156.2px;width:2.9px;height:14px;background:#6fb4f2;z-index:4"></div>
<svg class="a" style="left:166.5px;top:155.5px;z-index:4" width="17" height="17" viewBox="0 0 17 17"><path d="M1.4 8.6 A7 6.4 0 0 1 15 6.4" fill="none" stroke="#3b526b" stroke-width="1.5"/><path d="M15.6 1.6 V7 H10.2" fill="none" stroke="#3b526b" stroke-width="1.5"/><circle cx="8.5" cy="14" r="1.9" fill="#3b526b"/></svg>
<svg class="a" style="left:207px;top:155.5px;z-index:4" width="14" height="17" viewBox="0 0 14 17"><path d="M7 0.5 V10 M2 5.4 L7 10.4 L12 5.4" fill="none" stroke="#3b526b" stroke-width="1.5"/><circle cx="7" cy="14.6" r="1.9" fill="#3b526b"/></svg>
<svg class="a" style="left:246px;top:155.5px;z-index:4" width="14" height="17" viewBox="0 0 14 17"><path d="M7 10.6 V1.2 M2 6 L7 1 L12 6" fill="none" stroke="#3b526b" stroke-width="1.5"/><circle cx="7" cy="14.6" r="1.9" fill="#3b526b"/></svg>
<svg class="a" style="left:286.5px;top:154.6px;z-index:4" width="12" height="19" viewBox="0 0 12 19"><path d="M8.6 0 L0.6 10.4 H5.2 L3.2 19 L11.6 7.4 H6.8 Z" fill="#f5a623"/></svg>
<svg class="a" style="left:324.5px;top:155.5px;z-index:4" width="16.5" height="17" viewBox="0 0 16.5 17"><path d="M4.4 3.8 A6.6 6.6 0 1 1 1.6 9.4" fill="none" stroke="#89d185" stroke-width="1.95"/><path d="M1.2 0.8 V5.4 H5.8" fill="none" stroke="#89d185" stroke-width="1.95"/></svg>
<div class="a" style="left:363.8px;top:156px;width:15.8px;height:15px;box-sizing:border-box;border:2.2px solid #e88a6c;z-index:4"></div>
<svg class="a" style="left:402px;top:155px;z-index:4" width="19" height="19" viewBox="0 0 19 19"><circle cx="8.4" cy="8.4" r="7.1" fill="none" stroke="#2aa3ea" stroke-width="1.9"/><path d="M13.6 13.6 L17.6 17.6" stroke="#2aa3ea" stroke-width="2.4"/><path d="M9.4 3.6 H11.6 L6.2 9 L5 7.9 Z M9.4 8.2 H11.6 L9.6 10.2 L11.6 12.2 H9.4 L7.4 10.2 Z" fill="#2aa3ea"/></svg>
<span class="t"  style='left:117px;top:76.26px;font-size:16px;color:#cccccc;font-weight:400;font-family:"Liberation Sans", sans-serif;letter-spacing:-0.570px'>File</span>
<span class="t"  style='left:160.5px;top:76.26px;font-size:16px;color:#cccccc;font-weight:400;font-family:"Liberation Sans", sans-serif;letter-spacing:-0.320px'>Edit</span>
<span class="t"  style='left:207px;top:76.26px;font-size:16px;color:#cccccc;font-weight:400;font-family:"Liberation Sans", sans-serif;letter-spacing:-0.259px'>Selection</span>
<span class="t"  style='left:290.5px;top:76.26px;font-size:16px;color:#cccccc;font-weight:400;font-family:"Liberation Sans", sans-serif;letter-spacing:-0.223px'>View</span>
<span class="t"  style='left:344px;top:76.26px;font-size:16px;color:#cccccc;font-weight:400;font-family:"Liberation Sans", sans-serif;letter-spacing:-0.522px'>Go</span>
<span class="t"  style='left:384.5px;top:76.26px;font-size:16px;color:#cccccc;font-weight:400;font-family:"Liberation Sans", sans-serif;letter-spacing:-0.686px'>Run</span>
<span class="t"  style='left:432.5px;top:76.26px;font-size:16px;color:#cccccc;font-weight:400;font-family:"Liberation Sans", sans-serif;letter-spacing:-0.309px'>Terminal</span>
<span class="t"  style='left:553px;top:76.26px;font-size:16px;color:#b4b4b4;font-weight:400;font-family:"Liberation Sans", sans-serif;letter-spacing:-0.551px'>● main.dart - test - Visual Studio ...</span>
<span class="t" id="cfg" style='left:183.8px;top:116.16px;font-size:16px;color:#f0f0f0;font-weight:400;font-family:"Liberation Sans", sans-serif;letter-spacing:0.329px'>No Configurat</span>
<span class="t"  style='left:443px;top:116.16px;font-size:16px;color:#ffffff;font-weight:400;font-family:"Liberation Sans", sans-serif;letter-spacing:0.033px'>main.dart</span>
<span class="t"  style='left:432px;top:151.16px;font-size:16px;color:#a6a6a6;font-weight:400;font-family:"Liberation Sans", sans-serif;letter-spacing:-1.406px'>b</span>
<span class="t"  style='left:487.5px;top:151.16px;font-size:16px;color:#a6a6a6;font-weight:400;font-family:"Liberation Sans", sans-serif;letter-spacing:-0.134px'>main.dart</span>
<span class="t"  style='left:575px;top:151.16px;font-size:16px;color:#a6a6a6;font-weight:400;font-family:"Liberation Sans", sans-serif;letter-spacing:-1.115px'>...</span>
<span class="t"  style='left:488px;top:224.64px;font-size:14.6px;color:#999999;font-weight:400;font-family:"Liberation Sans", sans-serif;letter-spacing:-0.153px'>Run | Debug</span>
<span class="t"  style='left:147.5px;top:327.46px;font-size:14.1px;color:#c8c8c8;font-weight:700;font-family:"Liberation Sans", sans-serif;letter-spacing:-0.625px'>WATCH</span>
<span class="t"  style='left:147.5px;top:503.16px;font-size:14.1px;color:#c8c8c8;font-weight:700;font-family:"Liberation Sans", sans-serif;letter-spacing:-1.473px;word-spacing:2.5px'>CALL STACK</span>
<span class="t"  style='left:335.8px;top:504.77px;font-size:12.2px;color:#c8c8c8;font-weight:700;font-family:"Liberation Sans", sans-serif;letter-spacing:-0.554px'>RUNNING</span>
<span class="t"  style='left:147.5px;top:678.46px;font-size:14.1px;color:#c8c8c8;font-weight:700;font-family:"Liberation Sans", sans-serif;letter-spacing:-0.963px'>BREAKPOINTS</span>
<span class="t"  style='left:173px;top:704.86px;font-size:16px;color:#d6d6d6;font-weight:400;font-family:"Liberation Sans", sans-serif;letter-spacing:-0.250px'>All Exceptions</span>
<span class="t"  style='left:173px;top:732.36px;font-size:16px;color:#d6d6d6;font-weight:400;font-family:"Liberation Sans", sans-serif;letter-spacing:-0.195px'>Uncaught Exceptions</span>
<span class="t"  style='left:103.5px;top:750.66px;font-size:16px;color:#ffffff;font-weight:400;font-family:"Liberation Sans", sans-serif;letter-spacing:-3.406px;z-index:4'>1</span>
<span class="t"  style='left:136px;top:750.66px;font-size:16px;color:#ffffff;font-weight:400;font-family:"Liberation Sans", sans-serif;letter-spacing:0.094px;z-index:4'>0</span>
<span class="t"  style='left:170.5px;top:750.66px;font-size:16px;color:#ffffff;font-weight:400;font-family:"Liberation Sans", sans-serif;letter-spacing:-3.406px;z-index:4'>1</span>
<span class="t"  style='left:256px;top:750.66px;font-size:16px;color:#ffffff;font-weight:400;font-family:"Liberation Sans", sans-serif;letter-spacing:-0.917px;z-index:4'>CMake: [Debug]: Ready</span>
<span class="t"  style='left:449px;top:750.66px;font-size:16px;color:#ffffff;font-weight:400;font-family:"Liberation Sans", sans-serif;letter-spacing:-0.752px;z-index:4'>No Kit Selected</span>
<span class="t"  style='left:590.5px;top:750.66px;font-size:16px;color:#ffffff;font-weight:400;font-family:"Liberation Sans", sans-serif;letter-spacing:-0.816px;z-index:4'>Build</span>
<span class="t"  style='left:642.5px;top:750.66px;font-size:16px;color:#ffffff;font-weight:400;font-family:"Liberation Sans", sans-serif;letter-spacing:-0.481px;z-index:4'>[all]</span>
<span class="t"  style='left:780.5px;top:750.66px;font-size:16px;color:#ffffff;font-weight:400;font-family:"Liberation Sans", sans-serif;letter-spacing:-1.189px;z-index:4'>Run CTest</span>
<span class="t"  style='left:865px;top:750.66px;font-size:16px;color:#ffffff;font-weight:400;font-family:"Liberation Sans", sans-serif;letter-spacing:-0.774px;z-index:4'>Debug my code</span>
<span class="t"  style='left:992.3px;top:182.73px;font-size:15.2px;color:#ffffff;font-weight:400;font-family:"Liberation Sans", sans-serif;letter-spacing:-0.629px;z-index:6;-webkit-text-stroke:0.75px #fff'>Demo</span>
<span class="t"  style='left:987px;top:156.87px;font-size:9.6px;color:#0d3f6b;font-weight:400;font-family:"Liberation Sans", sans-serif;letter-spacing:-0.047px;z-index:6'>1:17</span>
<span class="t"  style='left:1108.8px;top:424.73px;font-size:10.6px;color:#ffffff;font-weight:400;font-family:"Liberation Sans", sans-serif;letter-spacing:-0.262px;z-index:6;-webkit-text-stroke:0.5px #fff'>Click me!</span>
<div class="a" style="left:283.9px;top:109.5px;width:28.6px;height:27px;background:#3c3c3c"></div>
<svg class="a" style="left:289.75px;top:120.925px" width="11.5" height="5.75" viewBox="0 0 11.5 5.75" ><path d="M0.5 0.3 L5.75 5.15 L11.0 0.3" fill="none" stroke="#c5c5c5" stroke-width="1.3"/></svg>
</body></html>
